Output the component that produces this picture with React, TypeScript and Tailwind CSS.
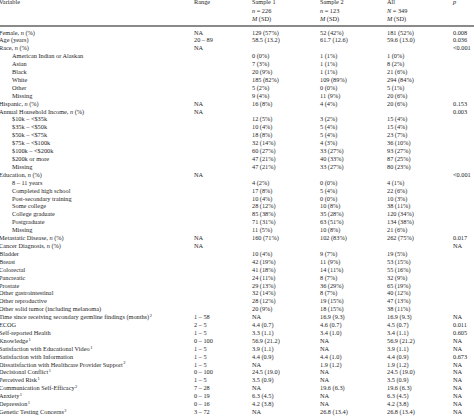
import React from "react";

type Row = {
  label: string;
  sup?: string;
  indent?: boolean;
  range?: string;
  s1?: string;
  s2?: string;
  all?: string;
  p?: string;
};

const rows: Row[] = [
  { label: "Female, n (%)", range: "NA", s1: "129 (57%)", s2: "52 (42%)", all: "181 (52%)", p: "0.008" },
  { label: "Age (years)", range: "20 – 89", s1: "58.5 (13.2)", s2: "61.7 (12.6)", all: "59.6 (13.0)", p: "0.036" },
  { label: "Race, n (%)", range: "NA", p: "<0.001" },
  { label: "American Indian or Alaskan", indent: true, s1: "0 (0%)", s2: "1 (1%)", all: "1 (0%)" },
  { label: "Asian", indent: true, s1: "7 (3%)", s2: "1 (1%)", all: "8 (2%)" },
  { label: "Black", indent: true, s1: "20 (9%)", s2: "1 (1%)", all: "21 (6%)" },
  { label: "White", indent: true, s1: "185 (82%)", s2: "109 (89%)", all: "294 (84%)" },
  { label: "Other", indent: true, s1: "5 (2%)", s2: "0 (0%)", all: "5 (1%)" },
  { label: "Missing", indent: true, s1: "9 (4%)", s2: "11 (9%)", all: "20 (6%)" },
  { label: "Hispanic, n (%)", range: "NA", s1: "16 (8%)", s2: "4 (4%)", all: "20 (6%)", p: "0.153" },
  { label: "Annual Household Income, n (%)", range: "NA", p: "0.003" },
  { label: "$10k – <$35k", indent: true, s1: "12 (5%)", s2: "3 (2%)", all: "15 (4%)" },
  { label: "$35k – <$50k", indent: true, s1: "10 (4%)", s2: "5 (4%)", all: "15 (4%)" },
  { label: "$50k – <$75k", indent: true, s1: "18 (8%)", s2: "5 (4%)", all: "23 (7%)" },
  { label: "$75k – <$100k", indent: true, s1: "32 (14%)", s2: "4 (3%)", all: "36 (10%)" },
  { label: "$100k – <$200k", indent: true, s1: "60 (27%)", s2: "33 (27%)", all: "93 (27%)" },
  { label: "$200k or more", indent: true, s1: "47 (21%)", s2: "40 (33%)", all: "87 (25%)" },
  { label: "Missing", indent: true, s1: "47 (21%)", s2: "33 (27%)", all: "80 (23%)" },
  { label: "Education, n (%)", range: "NA", p: "<0.001" },
  { label: "8 – 11 years", indent: true, s1: "4 (2%)", s2: "0 (0%)", all: "4 (1%)" },
  { label: "Completed high school", indent: true, s1: "17 (8%)", s2: "5 (4%)", all: "22 (6%)" },
  { label: "Post-secondary training", indent: true, s1: "10 (4%)", s2: "0 (0%)", all: "10 (3%)" },
  { label: "Some college", indent: true, s1: "28 (12%)", s2: "10 (8%)", all: "38 (11%)" },
  { label: "College graduate", indent: true, s1: "85 (38%)", s2: "35 (28%)", all: "120 (34%)" },
  { label: "Postgraduate", indent: true, s1: "71 (31%)", s2: "63 (51%)", all: "134 (38%)" },
  { label: "Missing", indent: true, s1: "11 (5%)", s2: "10 (8%)", all: "21 (6%)" },
  { label: "Metastatic Disease, n (%)", range: "NA", s1: "160 (71%)", s2: "102 (83%)", all: "262 (75%)", p: "0.017" },
  { label: "Cancer Diagnosis, n (%)", range: "NA", p: "NA" },
  { label: "Bladder", s1: "10 (4%)", s2: "9 (7%)", all: "19 (5%)" },
  { label: "Breast", s1: "42 (19%)", s2: "11 (9%)", all: "53 (15%)" },
  { label: "Colorectal", s1: "41 (18%)", s2: "14 (11%)", all: "55 (16%)" },
  { label: "Pancreatic", s1: "24 (11%)", s2: "8 (7%)", all: "32 (9%)" },
  { label: "Prostate", s1: "29 (13%)", s2: "36 (29%)", all: "65 (19%)" },
  { label: "Other gastrointestinal", s1: "32 (14%)", s2: "8 (7%)", all: "40 (12%)" },
  { label: "Other reproductive", s1: "28 (12%)", s2: "19 (15%)", all: "47 (13%)" },
  { label: "Other solid tumor (including melanoma)", s1: "20 (9%)", s2: "18 (15%)", all: "38 (11%)" },
  { label: "Time since receiving secondary germline findings (months)", sup: "2", range: "1 – 58", s1: "NA", s2: "16.9 (9.3)", all: "16.9 (9.3)", p: "NA" },
  { label: "ECOG", range: "2 – 5", s1: "4.4 (0.7)", s2: "4.6 (0.7)", all: "4.5 (0.7)", p: "0.011" },
  { label: "Self-reported Health", range: "1 – 5", s1: "3.3 (1.1)", s2: "3.4 (1.0)", all: "3.4 (1.1)", p: "0.605" },
  { label: "Knowledge", sup: "1", range: "0 – 100", s1: "56.9 (21.2)", s2: "NA", all: "56.9 (21.2)", p: "NA" },
  { label: "Satisfaction with Educational Video", sup: "1", range: "1 – 5", s1: "3.9 (1.1)", s2: "NA", all: "3.9 (1.1)", p: "NA" },
  { label: "Satisfaction with Information", range: "1 – 5", s1: "4.4 (0.9)", s2: "4.4 (1.0)", all: "4.4 (0.9)", p: "0.673" },
  { label: "Dissatisfaction with Healthcare Provider Support", sup: "2", range: "1 – 5", s1: "NA", s2: "1.9 (1.2)", all: "1.9 (1.2)", p: "NA" },
  { label: "Decisional Conflict", sup: "1", range: "0 – 100", s1: "24.5 (19.0)", s2: "NA", all: "24.5 (19.0)", p: "NA" },
  { label: "Perceived Risk", sup: "1", range: "1 – 5", s1: "3.5 (0.9)", s2: "NA", all: "3.5 (0.9)", p: "NA" },
  { label: "Communication Self-Efficacy", sup: "2", range: "7 – 28", s1: "NA", s2: "19.6 (6.3)", all: "19.6 (6.3)", p: "NA" },
  { label: "Anxiety", sup: "1", range: "0 – 19", s1: "6.3 (4.5)", s2: "NA", all: "6.3 (4.5)", p: "NA" },
  { label: "Depression", sup: "1", range: "0 – 16", s1: "4.2 (3.8)", s2: "NA", all: "4.2 (3.8)", p: "NA" },
  { label: "Genetic Testing Concerns", sup: "2", range: "3 – 72", s1: "NA", s2: "26.8 (13.4)", all: "26.8 (13.4)", p: "NA" },
];

// italicise the "n" in "n (%)"
const Label = ({ text }: { text: string }) => {
  const idx = text.indexOf(", n (%)");
  if (idx < 0) return <>{text}</>;
  return (
    <>
      {text.slice(0, idx)}, <i>n</i> (%)
    </>
  );
};

const cols = "grid grid-cols-[195px_58px_68px_67px_66px_40px]";

export default function App() {
  return (
    <div
      className="w-[474px] h-[418px] overflow-hidden bg-white text-[#1e1e1e]"
      style={{ fontFamily: '"Liberation Serif", "DejaVu Serif", serif' }}
    >
      <div className="-ml-[1px] -mt-[2px] text-[6.3px] leading-[8px] whitespace-nowrap">
        {/* header */}
        <div className={`${cols} leading-[8.5px] border-b-2 border-[#8a8a8a] pb-[1px]`}>
          <div>Variable</div>
          <div>Range</div>
          <div className="flex flex-col">
            <span>Sample 1</span>
            <span>
              <i>n</i> = 226
            </span>
            <span>
              <i>M</i> (SD)
            </span>
          </div>
          <div className="flex flex-col">
            <span>Sample 2</span>
            <span>
              <i>n</i> = 123
            </span>
            <span>
              <i>M</i> (SD)
            </span>
          </div>
          <div className="flex flex-col">
            <span>All</span>
            <span>
              <i>N</i> = 349
            </span>
            <span>
              <i>M</i> (SD)
            </span>
          </div>
          <div>
            <i>p</i>
          </div>
        </div>

        <div className="pt-[2px]">
          {rows.map((r, i) => (
            <div key={i} className={`${cols} h-[7.92px] leading-[7.92px]`}>
              <div className={r.indent ? "pl-[13px]" : ""}>
                <Label text={r.label} />
                {r.sup && <sup className="text-[4.5px] ml-[0.5px]">{r.sup}</sup>}
              </div>
              <div>{r.range}</div>
              <div>{r.s1}</div>
              <div>{r.s2}</div>
              <div>{r.all}</div>
              <div>{r.p}</div>
            </div>
          ))}
        </div>
      </div>
    </div>
  );
}
